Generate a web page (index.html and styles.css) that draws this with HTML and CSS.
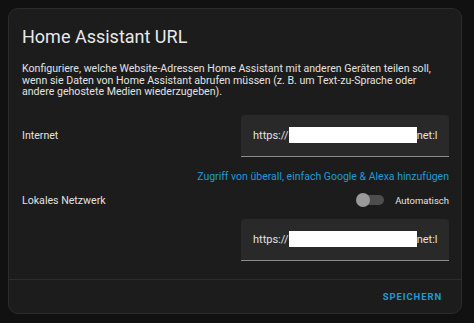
FILE: index.html
```html
<!DOCTYPE html>
<html lang="de">
<head>
    <meta charset="UTF-8">
    <meta name="viewport" content="width=device-width, initial-scale=1.0">
    <title>Home Assistant URL</title>
    <link rel="stylesheet" href="styles.css">
</head>
<body>
    <div class="card">
        <div class="card-content">
            <h1>Home Assistant URL</h1>
            <p class="description">
                Konfiguriere, welche Website-Adressen Home Assistant mit anderen Geräten teilen soll,
                wenn sie Daten von Home Assistant abrufen müssen (z. B. um Text-zu-Sprache oder
                andere gehostete Medien wiederzugeben).
            </p>
            <div class="row row-internet">
                <span class="label">Internet</span>
                <div class="url-field">
                    <span class="url-text">https://</span><span class="redacted"></span><span class="url-text">net:l</span>
                </div>
            </div>
            <div class="link-row">
                <a href="#" class="cloud-link">Zugriff von überall, einfach Google &amp; Alexa hinzufügen</a>
            </div>
            <div class="row row-local">
                <span class="label">Lokales Netzwerk</span>
                <div class="switch-group">
                    <span class="switch"><span class="switch-thumb"></span></span>
                    <span class="switch-label">Automatisch</span>
                </div>
            </div>
            <div class="row row-local-url">
                <div class="url-field">
                    <span class="url-text">https://</span><span class="redacted"></span><span class="url-text">net:l</span>
                </div>
            </div>
        </div>
        <div class="card-actions">
            <button class="save-button">Speichern</button>
        </div>
    </div>
</body>
</html>
```

FILE: styles.css
```css
body {
    margin: 0;
    padding: 8px;
    background-color: #111111;
    font-family: Roboto, 'Noto Sans', sans-serif;
    color: #e1e1e1;
}
.card {
    width: 452px;
    height: 304px;
    background-color: #1c1c1c;
    border: 1px solid #2c2c2c;
    border-radius: 10px;
    display: flex;
    flex-direction: column;
    box-sizing: content-box;
}
.card-content {
    flex: 1;
    padding: 0 12px 0 13px;
}
h1 {
    margin: 17px 0 0 0;
    font-size: 18px;
    font-weight: 400;
    line-height: 22px;
    color: #e8e8e8;
}
.description {
    margin: 15px 0 0 0;
    font-size: 10.6px;
    line-height: 11.5px;
    color: #e1e1e1;
}
.row {
    display: flex;
    align-items: center;
    justify-content: space-between;
}
.row-internet {
    margin-top: 17px;
}
.label {
    font-size: 10.6px;
    color: #e1e1e1;
}
.url-field {
    width: 196px;
    height: 41px;
    padding: 0 0 0 12px;
    background-color: #292929;
    border-bottom: 1px solid #8c8c8c;
    border-radius: 4px 4px 0 0;
    display: flex;
    align-items: center;
    overflow: hidden;
    white-space: nowrap;
}
.url-text {
    font-size: 11px;
    color: #e1e1e1;
}
.redacted {
    display: inline-block;
    width: 128px;
    height: 16px;
    background-color: #ffffff;
    flex-shrink: 0;
}
.link-row {
    display: flex;
    justify-content: flex-end;
    margin-top: 13px;
}
.cloud-link {
    font-size: 10.5px;
    color: #1e9ad6;
    text-decoration: none;
}
.row-local {
    margin-top: 11px;
}
.switch-group {
    display: flex;
    align-items: center;
    gap: 11px;
}
.switch {
    position: relative;
    width: 26px;
    height: 10px;
    border-radius: 5px;
    background-color: #4d4d4d;
}
.switch-thumb {
    position: absolute;
    left: -2px;
    top: -2px;
    width: 14px;
    height: 14px;
    border-radius: 50%;
    background-color: #9a9a9a;
}
.switch-label {
    font-size: 9.5px;
    color: #e1e1e1;
}
.row-local-url {
    justify-content: flex-end;
    margin-top: 12px;
}
.card-actions {
    height: 33px;
    border-top: 1px solid #2c2c2c;
    display: flex;
    align-items: center;
    justify-content: flex-end;
    padding-right: 19px;
}
.save-button {
    background: none;
    border: none;
    padding: 0;
    font-family: Roboto, 'Noto Sans', sans-serif;
    font-size: 9.5px;
    font-weight: 700;
    letter-spacing: 0.9px;
    text-transform: uppercase;
    color: #1e9ad6;
    cursor: pointer;
}
```
